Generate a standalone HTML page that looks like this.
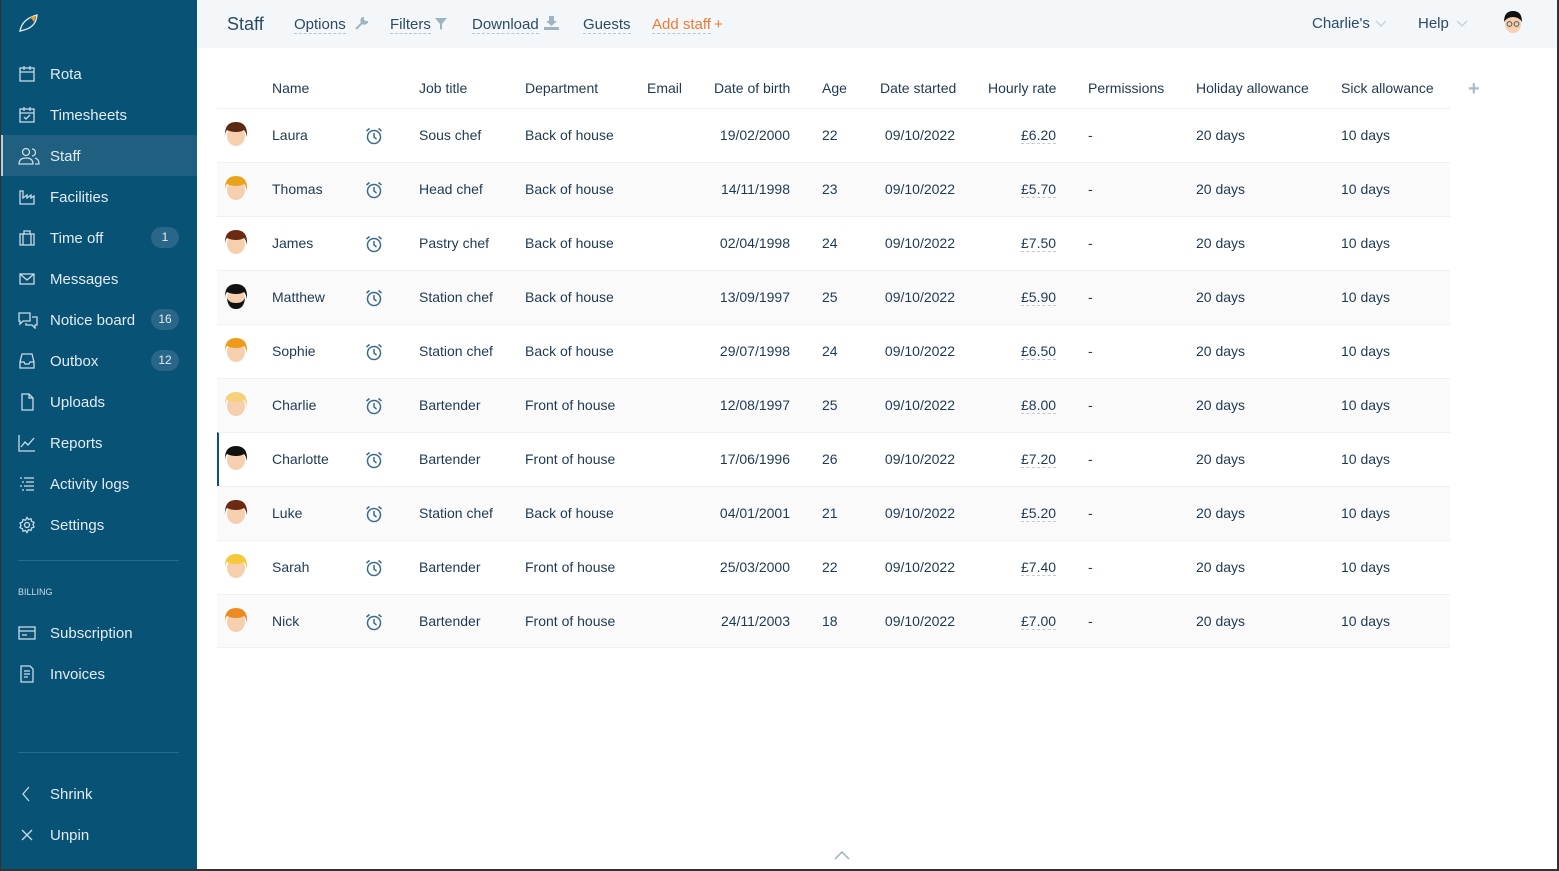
<!DOCTYPE html>
<html><head><meta charset="utf-8"><style>
*{box-sizing:border-box;margin:0;padding:0}
body{width:1559px;height:871px;position:relative;overflow:hidden;background:#fff;font-family:"Liberation Sans",sans-serif;color:#1e3a52}
#frame{position:absolute;inset:0;border-left:1px solid #333;border-right:2px solid #333;border-bottom:2px solid #333;pointer-events:none;z-index:10}
#side{position:absolute;left:0;top:0;width:197px;height:871px;background:#085276;color:#e2ecf2;font-size:15px}
.si{position:absolute;left:0;width:197px;height:41px;line-height:43px;padding-left:50px}
.si svg{position:absolute;left:18px;top:12px}
.si.act{background:#1f5f7f;border-left:3px solid #b9cfdc}
.badge{position:absolute;right:18px;top:10px;height:21px;min-width:28px;border-radius:11px;background:#2a6688;font-size:12px;line-height:21px;text-align:center}
.hr{position:absolute;left:18px;width:161px;height:1px;background:#2b6a8c}
#top{position:absolute;left:197px;top:0;right:0;height:48px;background:#f4f7f9}
.tn{position:absolute;top:16px;font-size:15px;color:#2b4a64;border-bottom:1px dashed #b9c6d0;line-height:17px}
.t{position:absolute;font-size:14px;white-space:nowrap;line-height:16px}
.row{position:absolute;left:217px;width:1233px;height:54px;border-top:1px solid #eef0f2}
.r{text-align:right}
</style></head><body>
<div id="side">
<svg style="position:absolute;left:18px;top:13px" width="22" height="20" viewBox="0 0 22 20"><path d="M2 18 Q4 6 19 2 Q18 14 6 17 Z" fill="none" stroke="#dfe9ef" stroke-width="1.4"/><path d="M12 4 L18 3 L16 9 Z" fill="#f39a1e"/></svg>
<div class="si" style="top:53px"><svg width="18" height="18" viewBox="0 0 18 18" fill="none" stroke="#c9dbe6" stroke-width="1.3"><rect x="2" y="3" width="14" height="13"/><path d="M2 7h14M6 1v4M12 1v4"/></svg>Rota</div>
<div class="si" style="top:94px"><svg width="18" height="18" viewBox="0 0 18 18" fill="none" stroke="#c9dbe6" stroke-width="1.3"><rect x="2" y="3" width="14" height="13"/><path d="M2 7h14M6 1v4M12 1v4M6 11l2 2 4-4"/></svg>Timesheets</div>
<div class="si act" style="top:135px;padding-left:47px"><svg style="left:15px" width="22" height="18" viewBox="0 0 22 18" fill="none" stroke="#c9dbe6" stroke-width="1.3"><circle cx="8" cy="5" r="3.5"/><path d="M1 17q0-6 7-6t7 6zM14 2a3.5 3.5 0 010 7M17 11q4 1 4 6h-4"/></svg>Staff</div>
<div class="si" style="top:176px"><svg width="18" height="18" viewBox="0 0 18 18" fill="none" stroke="#c9dbe6" stroke-width="1.3"><path d="M2 16V3h3v7l4-3v3l4-3v3l3-2v8z"/></svg>Facilities</div>
<div class="si" style="top:217px"><svg width="18" height="18" viewBox="0 0 18 18" fill="none" stroke="#c9dbe6" stroke-width="1.3"><rect x="2" y="5" width="14" height="11"/><path d="M6 5V2h6v3M5 5v11M13 5v11"/></svg>Time off<span class="badge">1</span></div>
<div class="si" style="top:258px"><svg width="18" height="18" viewBox="0 0 18 18" fill="none" stroke="#c9dbe6" stroke-width="1.3"><rect x="2" y="4" width="14" height="10"/><path d="M2 4l7 6 7-6"/></svg>Messages</div>
<div class="si" style="top:299px"><svg width="20" height="18" viewBox="0 0 20 18" fill="none" stroke="#c9dbe6" stroke-width="1.3"><path d="M1 2h11v8H5l-3 3v-3H1zM14 6h5v8h-2v3l-3-3H8v-2"/></svg>Notice board<span class="badge">16</span></div>
<div class="si" style="top:340px"><svg width="18" height="18" viewBox="0 0 18 18" fill="none" stroke="#c9dbe6" stroke-width="1.3"><path d="M2 10l2-8h10l2 8v6H2zM2 10h4l1 2h4l1-2h4"/></svg>Outbox<span class="badge">12</span></div>
<div class="si" style="top:381px"><svg width="18" height="18" viewBox="0 0 18 18" fill="none" stroke="#c9dbe6" stroke-width="1.3"><path d="M4 1h7l4 4v12H4zM11 1v4h4"/></svg>Uploads</div>
<div class="si" style="top:422px"><svg width="18" height="18" viewBox="0 0 18 18" fill="none" stroke="#c9dbe6" stroke-width="1.3"><path d="M1 1v16h16M3 13l4-5 3 3 6-7"/></svg>Reports</div>
<div class="si" style="top:463px"><svg width="18" height="18" viewBox="0 0 18 18" fill="none" stroke="#c9dbe6" stroke-width="1.3"><path d="M2 3h2M6 3h10M4 7h2M8 7h8M2 11h2M6 11h10M4 15h2M8 15h8"/></svg>Activity logs</div>
<div class="si" style="top:504px"><svg width="18" height="18" viewBox="0 0 18 18" fill="none" stroke="#c9dbe6" stroke-width="1.3"><circle cx="9" cy="9" r="2.5"/><path d="M9 1.5l1.5 2 2.5-.7.6 2.5 2.4 1-1 2.4 1 2.3-2.4 1-.6 2.5-2.5-.7L9 16.5l-1.5-2-2.5.7-.6-2.5-2.4-1 1-2.3-1-2.4 2.4-1 .6-2.5 2.5.7z"/></svg>Settings</div>
<div class="hr" style="top:560px"></div>
<div style="position:absolute;left:18px;top:587px;font-size:9px;color:#c9dbe6">BILLING</div>
<div class="si" style="top:612px"><svg width="18" height="18" viewBox="0 0 18 18" fill="none" stroke="#c9dbe6" stroke-width="1.3"><rect x="1" y="3" width="16" height="12"/><path d="M1 7h16M4 11h5"/></svg>Subscription</div>
<div class="si" style="top:653px"><svg width="18" height="18" viewBox="0 0 18 18" fill="none" stroke="#c9dbe6" stroke-width="1.3"><path d="M3 1h9l3 3v13H3zM6 6h6M6 9h6M6 12h4"/></svg>Invoices</div>
<div class="hr" style="top:752px"></div>
<div class="si" style="top:773px"><svg width="18" height="18" viewBox="0 0 18 18" fill="none" stroke="#c9dbe6" stroke-width="1.3"><path d="M11 2L5 9l6 7"/></svg>Shrink</div>
<div class="si" style="top:814px"><svg width="18" height="18" viewBox="0 0 18 18" fill="none" stroke="#c9dbe6" stroke-width="1.3"><path d="M4 4l10 10M14 4L4 14"/></svg>Unpin</div>
</div>

<div id="top">
<div style="position:absolute;left:30px;top:14px;font-size:18px;color:#2b4a64">Staff</div>
<div class="tn" style="left:97px">Options</div><svg style="position:absolute;left:157px;top:17px" width="14" height="14" viewBox="0 0 14 14"><path d="M2 12l6-6M9 1a3 3 0 104 4l-2 0-2-2z" stroke="#9fb4c3" stroke-width="2" fill="#9fb4c3"/></svg>
<div class="tn" style="left:193px">Filters</div><svg style="position:absolute;left:238px;top:18px" width="12" height="12" viewBox="0 0 12 12"><path d="M0 0h12L7 6v6L5 11V6z" fill="#9fb4c3"/></svg>
<div class="tn" style="left:275px">Download</div><svg style="position:absolute;left:347px;top:16px" width="15" height="14" viewBox="0 0 15 14"><path d="M5 0h5v5h3L7.5 10 2 5h3zM0 11h15v3H0z" fill="#9fb4c3"/></svg>
<div class="tn" style="left:386px">Guests</div>
<div class="tn" style="left:455px;color:#f07a32">Add staff</div><div style="position:absolute;left:517px;top:16px;color:#f07a32;font-size:15px">+</div>
<div style="position:absolute;left:1115px;top:15px;font-size:15px;color:#2b4a64">Charlie's</div><svg style="position:absolute;left:1178px;top:20px" width="12" height="8"><path d="M1 1l5 5 5-5" stroke="#c3d0da" fill="none" stroke-width="1.3"/></svg>
<div style="position:absolute;left:1221px;top:15px;font-size:15px;color:#2b4a64">Help</div><svg style="position:absolute;left:1259px;top:20px" width="12" height="8"><path d="M1 1l5 5 5-5" stroke="#c3d0da" fill="none" stroke-width="1.3"/></svg>
<svg style="position:absolute;left:1305px;top:10px" width="22" height="26" viewBox="0 0 22 26"><ellipse cx="11" cy="14" rx="8" ry="9" fill="#f6cfae"/><path d="M2 12Q2 1 11 1t9 11q-3-5-9-5t-9 5z" fill="#111"/><circle cx="7.5" cy="14" r="2.4" fill="none" stroke="#555"/><circle cx="14.5" cy="14" r="2.4" fill="none" stroke="#555"/></svg>
</div>

<div class="t" style="left:272px;top:80px">Name</div>
<div class="t" style="left:419px;top:80px">Job title</div>
<div class="t" style="left:525px;top:80px">Department</div>
<div class="t" style="left:647px;top:80px">Email</div>
<div class="t" style="left:714px;top:80px">Date of birth</div>
<div class="t" style="left:822px;top:80px">Age</div>
<div class="t" style="left:880px;top:80px">Date started</div>
<div class="t" style="left:988px;top:80px">Hourly rate</div>
<div class="t" style="left:1088px;top:80px">Permissions</div>
<div class="t" style="left:1196px;top:80px">Holiday allowance</div>
<div class="t" style="left:1341px;top:80px">Sick allowance</div>
<div style="position:absolute;left:1468px;top:78px;font-size:20px;color:#a9bccb;font-weight:bold">+</div>

<div id="rows"></div>
<script>
var d=[["Laura","Sous chef","Back of house","19/02/2000","22","£6.20","#5a2a14"],
["Thomas","Head chef","Back of house","14/11/1998","23","£5.70","#e8a21c"],
["James","Pastry chef","Back of house","02/04/1998","24","£7.50","#6b2a12"],
["Matthew","Station chef","Back of house","13/09/1997","25","£5.90","#111"],
["Sophie","Station chef","Back of house","29/07/1998","24","£6.50","#f09a1a"],
["Charlie","Bartender","Front of house","12/08/1997","25","£8.00","#f5d27a"],
["Charlotte","Bartender","Front of house","17/06/1996","26","£7.20","#111"],
["Luke","Station chef","Back of house","04/01/2001","21","£5.20","#6b2a12"],
["Sarah","Bartender","Front of house","25/03/2000","22","£7.40","#f6c93a"],
["Nick","Bartender","Front of house","24/11/2003","18","£7.00","#ee8a22"]];
var h="";
d.forEach(function(r,i){var y=108+i*54,ty=y+19;
h+='<div class="row" style="top:'+y+'px;background:'+(i%2?'#fafafa':'#fff')+(i==6?';border-left:2px solid #0a5378':'')+(i==9?';border-bottom:1px solid #eef0f2':'')+'"></div>';
h+='<svg style="position:absolute;left:223px;top:'+(y+13)+'px" width="26" height="28" viewBox="0 0 26 28"><ellipse cx="13" cy="15" rx="9" ry="10" fill="#f6cfae"/><path d="M2 16Q1 1 13 1t11 15q-1-5-3-7q-3 2-8 2t-9-2q-2 2-2 7z" fill="'+r[6]+'"/>'+(i==3?'<path d="M4 15q1 11 9 11t9-11q-2 5-9 5t-9-5z" fill="#111"/>':'')+'</svg>';
h+='<div class="t" style="left:272px;top:'+ty+'px">'+r[0]+'</div>';
h+='<svg style="position:absolute;left:365px;top:'+(y+19)+'px" width="18" height="18" viewBox="0 0 18 18" fill="none" stroke="#3b6a8c" stroke-width="1.5"><circle cx="9" cy="10" r="6.5"/><path d="M9 6v4l2.5 2M1.5 4l3-2.5M16.5 4l-3-2.5"/></svg>';
h+='<div class="t" style="left:419px;top:'+ty+'px">'+r[1]+'</div>';
h+='<div class="t" style="left:525px;top:'+ty+'px">'+r[2]+'</div>';
h+='<div class="t r" style="left:690px;width:100px;top:'+ty+'px">'+r[3]+'</div>';
h+='<div class="t" style="left:822px;top:'+ty+'px">'+r[4]+'</div>';
h+='<div class="t r" style="left:855px;width:100px;top:'+ty+'px">09/10/2022</div>';
h+='<div class="t" style="left:1021px;top:'+ty+'px;border-bottom:1px dashed #c3c9ce">'+r[5]+'</div>';
h+='<div class="t" style="left:1088px;top:'+ty+'px">-</div>';
h+='<div class="t" style="left:1196px;top:'+ty+'px">20 days</div>';
h+='<div class="t" style="left:1341px;top:'+ty+'px">10 days</div>';});
document.getElementById("rows").innerHTML=h;
</script>
<svg style="position:absolute;left:834px;top:850px" width="16" height="10"><path d="M1 9l7-7 7 7" stroke="#9fb0bd" fill="none" stroke-width="1.5"/></svg>
<div id="frame"></div>
</body></html>
